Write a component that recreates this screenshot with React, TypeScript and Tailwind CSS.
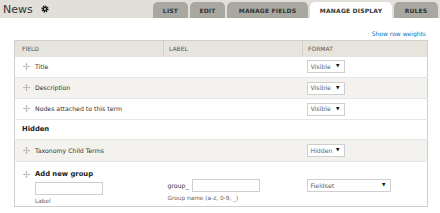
import React from 'react';

const font = { fontFamily: '"DejaVu Sans", Verdana, sans-serif' };

const DragHandle: React.FC = () => (
  <svg width="7" height="7" viewBox="0 0 14 14" className="shrink-0">
    <g fill="none" stroke="#a3a3a3" strokeWidth="1.2">
      <path d="M7 1.5v11M1.5 7h11" />
    </g>
    <g fill="#a3a3a3">
      <path d="M7 0l2.2 2.8h-4.4z" />
      <path d="M7 14l2.2-2.8h-4.4z" />
      <path d="M0 7l2.8-2.2v4.4z" />
      <path d="M14 7l-2.8-2.2v4.4z" />
    </g>
  </svg>
);

const Gear: React.FC = () => (
  <svg width="8" height="8" viewBox="0 0 14 14">
    <circle cx="7" cy="7" r="5" fill="none" stroke="#111" strokeWidth="2.6" strokeDasharray="2.3 1.6" />
    <circle cx="7" cy="7" r="4" fill="#111" />
    <circle cx="7" cy="7" r="1.8" fill="#e1dfd8" />
  </svg>
);

const FakeSelect: React.FC<{ label: string; wide?: boolean }> = ({ label, wide }) => (
  <div
    className={`flex items-center justify-between h-[13px] bg-white border border-[#cfcfcf] pl-[3px] pr-[4px] text-[6.2px] text-[#666] ${
      wide ? 'w-[84px]' : 'w-[38px]'
    }`}
  >
    <span>{label}</span>
    <span className="text-[4.5px] text-[#111]">▼</span>
  </div>
);

const tabs = ['LIST', 'EDIT', 'MANAGE FIELDS', 'MANAGE DISPLAY', 'RULES'];
const tabWidths = ['w-[35px]', 'w-[35px]', 'w-[81px]', 'w-[82px]', 'w-[44px]'];

const FieldRow: React.FC<{ name: string; format: string; shaded?: boolean; h: string }> = ({ name, format, shaded, h }) => (
  <tr className={`${h} ${shaded ? 'bg-[#f3f2ee]' : 'bg-white'} border-b border-[#e6e6e6]`}>
    <td colSpan={2} className="pl-[8px]">
      <div className="flex items-center gap-[5px] text-[6.2px] text-[#333]">
        <DragHandle />
        <span>{name}</span>
      </div>
    </td>
    <td className="pl-[4px]">
      <FakeSelect label={format} />
    </td>
  </tr>
);

export default function App() {
  return (
    <div className="w-[440px] h-[213px] bg-white overflow-hidden" style={font}>
      <div className="flex items-end justify-between h-[18px] bg-[#e1dfd8] pl-[3px] pr-[2px]">
        <div className="flex items-center gap-[8px] self-center text-[11px] text-[#333] leading-none">
          <span>News</span>
          <Gear />
        </div>
        <div className="flex gap-[2px]">
          {tabs.map((t, i) => (
            <div
              key={t}
              className={`${tabWidths[i]} h-[16px] rounded-t-[5px] flex items-center justify-center text-[6px] font-bold tracking-[0.2px] ${
                t === 'MANAGE DISPLAY' ? 'bg-white text-[#333]' : 'bg-[#a8a7a0] text-[#333]'
              }`}
            >
              {t}
            </div>
          ))}
        </div>
      </div>

      <div className="flex justify-end pr-[14px] pt-[13px] h-[22px] text-[6px] text-[#0074bd] leading-none">
        Show row weights
      </div>

      <table className="ml-[14px] w-[413px] border-collapse border border-[#cfcfcf] table-fixed">
        <colgroup>
          <col className="w-[149px]" />
          <col className="w-[139px]" />
          <col className="w-[125px]" />
        </colgroup>
        <thead>
          <tr className="h-[16px] bg-[#e6e4dc] text-[6px] text-[#555] text-left">
            <th className="font-normal pl-[7px] border-r border-[#cfcfcf]">FIELD</th>
            <th className="font-normal pl-[5px] border-r border-[#cfcfcf]">LABEL</th>
            <th className="font-normal pl-[5px]">FORMAT</th>
          </tr>
        </thead>
        <tbody>
          <FieldRow name="Title" format="Visible" h="h-[21px]" />
          <FieldRow name="Description" format="Visible" shaded h="h-[21px]" />
          <FieldRow name="Nodes attached to this term" format="Visible" h="h-[21px]" />
          <tr className="h-[20px] bg-white border-b border-[#e6e6e6]">
            <td colSpan={3} className="pl-[7px] text-[6.8px] font-bold text-[#222]">
              Hidden
            </td>
          </tr>
          <FieldRow name="Taxonomy Child Terms" format="Hidden" shaded h="h-[22px]" />
          <tr className="h-[42px] bg-white align-top">
            <td className="pl-[8px] pt-[7px]">
              <div className="flex items-center gap-[5px] text-[6.8px] font-bold text-[#222]">
                <DragHandle />
                <span>Add new group</span>
              </div>
              <div className="ml-[12px] mt-[3px] w-[68px] h-[13px] border border-[#cfcfcf] bg-white" />
              <div className="ml-[12px] mt-[2px] text-[5.8px] text-[#666]">Label</div>
            </td>
            <td className="pt-[17px] pl-[4px]">
              <div className="flex items-center gap-[3px]">
                <span className="text-[6.2px] text-[#333]">group_</span>
                <div className="w-[68px] h-[13px] border border-[#cfcfcf] bg-white" />
              </div>
              <div className="mt-[2px] text-[5.8px] text-[#666]">Group name (a-z, 0-9, _)</div>
            </td>
            <td className="pt-[17px] pl-[4px]">
              <FakeSelect label="Fieldset" wide />
            </td>
          </tr>
        </tbody>
      </table>
    </div>
  );
}
